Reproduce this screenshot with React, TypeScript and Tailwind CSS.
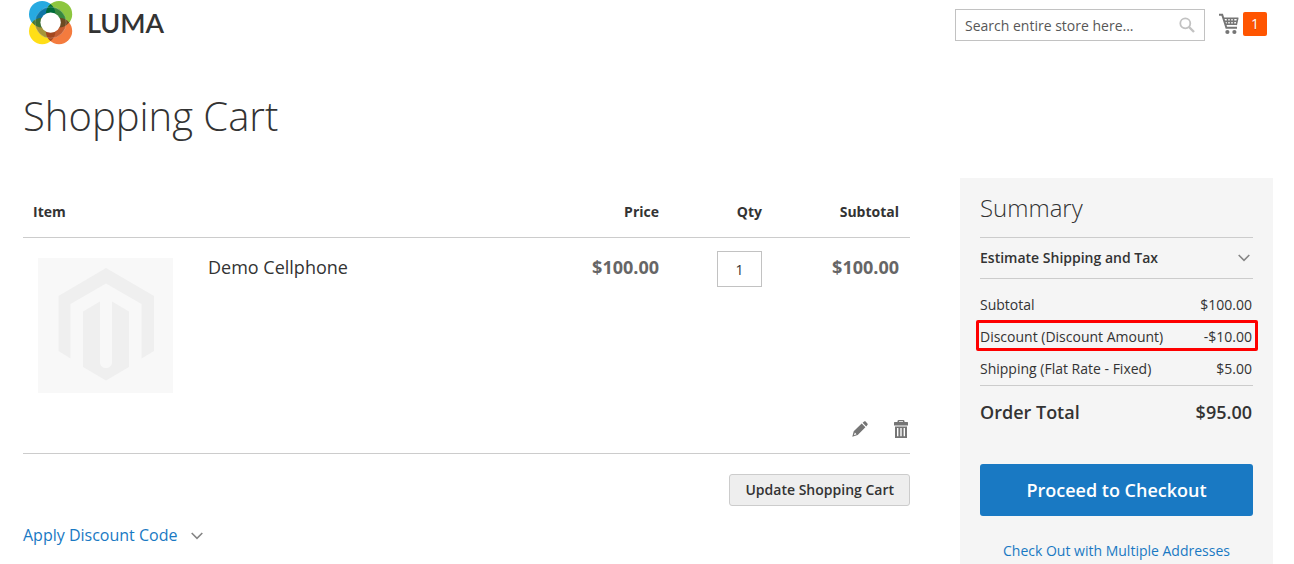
import { useState } from "react";

interface IconProps {
  className?: string;
}

const LumaMark: React.FC = () => (
  <svg className="h-[45px] w-11" viewBox="0 0 44 45" aria-hidden="true">
    <circle cx="13.200" cy="14.200" r="13.200" fill="#27aae1" />
    <circle cx="30" cy="14.200" r="13.200" fill="#8dc63f" />
    <circle cx="13.200" cy="31" r="13.200" fill="#ffde17" />
    <circle cx="30" cy="31" r="13.200" fill="#f47b3e" />
    <path d="M6 22.600A15.600 15.600 0 0 1 21.600 7V22.600z" fill="#0f76a6" />
    <path d="M21.600 7A15.600 15.600 0 0 1 37.200 22.600H21.600z" fill="#37883e" />
    <path d="M6 22.600A15.600 15.600 0 0 0 21.600 38.200V22.600z" fill="#a5953a" />
    <path d="M37.200 22.600A15.600 15.600 0 0 1 21.600 38.200V22.600z" fill="#c45c30" />
    <path d="M21.600 4A13.200 13.200 0 0 1 21.600 24.400A13.200 13.200 0 0 1 21.600 4z" fill="#006b3a" />
    <path d="M21.600 20.800A13.200 13.200 0 0 1 21.600 41.200A13.200 13.200 0 0 1 21.600 20.800z" fill="#a3481f" />
    <path d="M3 22.600A13.200 13.200 0 0 1 23.400 22.600A13.200 13.200 0 0 1 3 22.600z" fill="#3f7134" />
    <path d="M19.800 22.600A13.200 13.200 0 0 1 40.200 22.600A13.200 13.200 0 0 1 19.800 22.600z" fill="#6b4a22" />
    <circle cx="21.600" cy="22.600" r="15.600" fill="none" stroke="#fff" strokeOpacity=".35" strokeWidth=".6" />
    <circle cx="21.600" cy="22.600" r="10.200" fill="#fff" />
  </svg>
);

const SearchIcon: React.FC = () => (
  <svg className="size-4" viewBox="0 0 16 16" fill="none" stroke="#c2c2c2" aria-hidden="true">
    <circle cx="6.3" cy="6.3" r="5" strokeWidth="1.8" />
    <path d="M10 10l5 5" strokeWidth="2.4" />
  </svg>
);

const CartIcon: React.FC = () => (
  <svg className="h-[22px] w-5" viewBox="0 0 20 22" fill="none" stroke="#757575" aria-hidden="true">
    <path d="M0 1.800h3.200L7.400 14.800H18" strokeWidth="2" />
    <path
      d="M4.600 5.300h14.800M5.600 8.300h13M6.400 11.300h11.600M8.500 5v7M11.500 5v7M14.500 5v7M18.800 5l-1.600 7"
      strokeWidth="1.600"
    />
    <circle cx="8.400" cy="19" r="2.100" fill="#757575" stroke="none" />
    <circle cx="15.400" cy="19" r="2.100" fill="#757575" stroke="none" />
  </svg>
);

const ChevronIcon: React.FC<IconProps> = ({ className }) => (
  <svg className={className} viewBox="0 0 12 8" fill="none" stroke="#858585" strokeWidth="1.6" aria-hidden="true">
    <path d="M.7 1L6 6.3 11.3 1" />
  </svg>
);

const PencilIcon: React.FC = () => (
  <svg className="size-4" viewBox="0 0 16 16" fill="#757575" aria-hidden="true">
    <path fillRule="evenodd" d="M.3 15.7L1.700 10.200 9.700 2.500l3.700 3.700-7.700 7.700zM1.900 14.2l2.6-.9-1.6-1.8z" />
    <path d="M10.600 1.800l1.500-1.200c.5-.5 1-.5 1.5 0l1.800 1.8c.5.5.5 1 0 1.5L14.200 5.400z" />
  </svg>
);

const TrashIcon: React.FC = () => (
  <svg className="h-[18px] w-[14px]" viewBox="0 0 14 18" fill="#757575" aria-hidden="true">
    <path
      fillRule="evenodd"
      d="M3.500 2V.8L4.500 0h5l1 .8V2h3l.5.6V5.500H0V2.6L.5 2zM5 2h4v-.8H5zM1 6.500h12V18H1zM3 8v8.2h1.4V8zM6.3 8v8.2h1.4V8zM9.6 8v8.2H11V8z"
    />
  </svg>
);

const ProductPlaceholder: React.FC = () => (
  <svg className="size-[135px]" viewBox="0 0 135 135" role="img" aria-label="Demo Cellphone">
    <path d="M0 0h135v135H0z" fill="#f8f8f8" />
    <path d="M68 10l48 28v55l-12.500 7.500V46L68 25.500 32.500 46v54.500L20.500 93V38z" fill="#efefef" />
    <path d="M45 53.500L62 43.500V104c0 8 12 8 12 0V43.500l17 10V109l-23 13.500L45 109z" fill="#efefef" />
  </svg>
);

const Header: React.FC = () => (
  <header className="flex items-start justify-between px-[6px]">
    <a href="#" className="flex items-center gap-[14px]" aria-label="Luma">
      <LumaMark />
      <span className="font-['Lato',sans-serif] text-[27px] leading-[44px] font-semibold">LUMA</span>
    </a>
    <div className="flex items-center gap-[14px] pt-[9px]">
      <form
        className="flex h-8 w-[250px] items-center border border-[#c2c2c2] px-[9px]"
        onSubmit={(event) => event.preventDefault()}
      >
        <input
          type="text"
          aria-label="Search"
          placeholder="Search entire store here..."
          className="min-w-0 flex-1 pt-px text-sm placeholder:text-[#575757] focus:outline-none"
        />
        <button type="submit" aria-label="Search">
          <SearchIcon />
        </button>
      </form>
      <a href="#" className="flex items-center gap-1 pb-[2px]" aria-label="My Cart">
        <CartIcon />
        <span className="h-6 w-6 rounded-xs bg-[#ff5501] text-center text-sm leading-6 text-white text-shadow-xs">
          1
        </span>
      </a>
    </div>
  </header>
);

const CartTable: React.FC = () => {
  const [qty, setQty] = useState("1");

  return (
    <table className="w-full">
      <thead>
        <tr className="border-b border-[#ccc] text-sm leading-5">
          <th className="px-[10px] pt-6 pb-[15px] text-left font-bold">Item</th>
          <th className="w-36 pt-6 pb-[15px] text-right font-bold">Price</th>
          <th className="w-[103px] pt-6 pb-[15px] text-right font-bold">Qty</th>
          <th className="w-[148px] px-[11px] pt-6 pb-[15px] text-right font-bold">Subtotal</th>
        </tr>
      </thead>
      <tbody>
        <tr className="align-top text-lg leading-6">
          <td className="flex gap-[35px] pt-5 pl-[15px]">
            <ProductPlaceholder />
            <a href="#" className="-mt-[3px]">Demo Cellphone</a>
          </td>
          <td className="pt-[17px] text-right font-bold text-[#666]">$100.00</td>
          <td className="pt-[13px] text-right">
            <input
              type="text"
              aria-label="Qty"
              value={qty}
              onChange={(event) => setQty(event.target.value)}
              className="h-9 w-[45px] border border-[#c2c2c2] text-center text-sm"
            />
          </td>
          <td className="px-[11px] pt-[17px] text-right font-bold text-[#666]">$100.00</td>
        </tr>
        <tr className="border-b border-[#ccc]">
          <td colSpan={4} className="pt-[27px] pr-[2px] pb-[15px]">
            <div className="flex items-center justify-end gap-[26px]">
              <button type="button" aria-label="Edit item">
                <PencilIcon />
              </button>
              <button type="button" aria-label="Remove item">
                <TrashIcon />
              </button>
            </div>
          </td>
        </tr>
      </tbody>
    </table>
  );
};

const Summary: React.FC = () => (
  <aside className="w-[313px] shrink-0 bg-[#f5f5f5] px-5 pt-[13px] pb-6">
    <h2 className="pb-3 text-2xl leading-[34px] font-light">Summary</h2>
    <button
      type="button"
      className="flex w-full items-center justify-between border-y border-[#ccc] py-[10px] pr-[3px] text-sm leading-5 font-semibold"
    >
      Estimate Shipping and Tax
      <ChevronIcon className="h-2 w-3" />
    </button>
    <table className="mt-[10px] w-full text-sm">
      <tbody>
        <tr className="h-8">
          <th scope="row" className="text-left font-normal">Subtotal</th>
          <td className="pr-px text-right">$100.00</td>
        </tr>
        <tr className="relative h-8">
          <th scope="row" className="text-left font-normal">
            Discount (Discount Amount)
            <span className="absolute -top-px -right-[5px] bottom-[2px] -left-1 rounded-xs border-3 border-[#fe0000]" />
          </th>
          <td className="pr-px text-right">-$10.00</td>
        </tr>
        <tr className="h-8">
          <th scope="row" className="text-left font-normal">Shipping (Flat Rate - Fixed)</th>
          <td className="pr-px text-right">$5.00</td>
        </tr>
        <tr className="h-[54px] border-t border-[#ccc] text-lg">
          <th scope="row" className="text-left font-semibold">Order Total</th>
          <td className="pr-px text-right font-semibold">$95.00</td>
        </tr>
      </tbody>
    </table>
    <button
      type="button"
      className="mt-[25px] h-[52px] w-full rounded-[3px] bg-[#1979c3] text-lg font-semibold text-white"
    >
      Proceed to Checkout
    </button>
    <a href="#" className="mt-[25px] block text-center text-sm leading-5 text-[#1979c3]">
      Check Out with Multiple Addresses
    </a>
  </aside>
);

const App: React.FC = () => {
  return (
    <div className="h-screen overflow-hidden bg-white pr-[21px] pl-[23px] font-['Open_Sans',sans-serif] text-[#333]">
      <Header />
      <h1 className="pt-[43px] text-[40px] leading-[56px] font-light">Shopping Cart</h1>
      <main className="mt-[34px] flex items-start gap-[50px]">
        <section className="min-w-0 flex-1">
          <CartTable />
          <div className="mt-5 flex justify-end">
            <button
              type="button"
              className="h-8 rounded-[3px] border border-[#ccc] bg-[#eee] px-[15px] text-sm font-semibold"
            >
              Update Shopping Cart
            </button>
          </div>
          <button type="button" className="mt-[17px] flex items-center gap-[14px] text-base text-[#1979c3]">
            Apply Discount Code
            <ChevronIcon className="mt-[2px] h-2 w-3" />
          </button>
        </section>
        <Summary />
      </main>
    </div>
  );
};

export default App;
